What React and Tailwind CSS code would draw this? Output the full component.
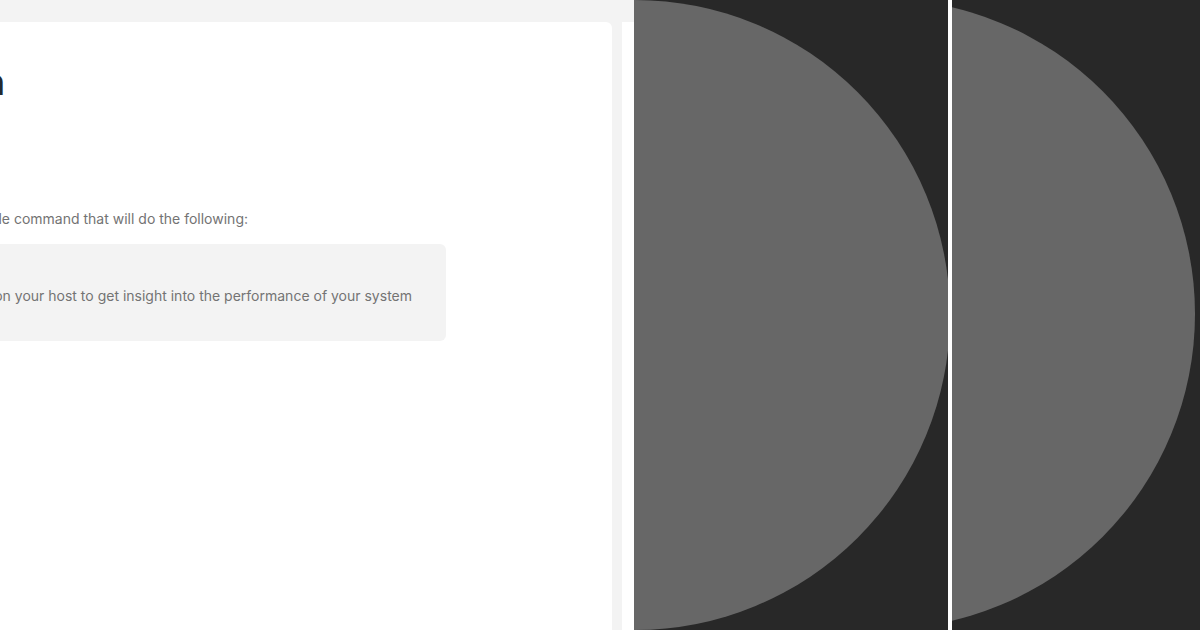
const font = { fontFamily: "Inter, 'Liberation Sans', sans-serif" };

function HalfMoon({ shift, top }) {
  // gray disc, its centre sits near the panel's left edge
  return (
    <div className="relative h-full overflow-hidden bg-[#282828]">
      <div
        className="absolute h-[630px] w-[630px] rounded-full bg-[#676767]"
        style={{ left: -315 - shift, top: top }}
      />
    </div>
  );
}

export default function App() {
  return (
    <div
      className="flex h-[630px] w-[1200px] overflow-hidden bg-[#f3f3f3]"
      style={font}
    >
      <div className="flex shrink-0 gap-[10px] pt-[22px]">
        <div className="flex w-[612px] flex-col overflow-hidden rounded-tr-md bg-white">
          <div className="mt-[38px] flex w-[5px] justify-end overflow-hidden whitespace-nowrap">
            <h1 className="text-[36px] font-semibold leading-[44px] text-[#24292f]">
              Installation
            </h1>
          </div>
          <div className="mt-[105px] flex w-[248px] justify-end overflow-hidden whitespace-nowrap">
            <p className="text-[14px] leading-[20px] text-[#737373]">
              We provide a single command that will do the following:
            </p>
          </div>
          <div className="mt-[15px] flex h-[97px] w-[446px] items-end rounded-r-md bg-[#f3f3f3] pb-[35px]">
            <div className="flex w-[412px] justify-end overflow-hidden whitespace-nowrap">
              <p className="text-[14px] leading-[20px] text-[#737373]">
                Install the Netdata agent on your host to get insight into the performance of your system
              </p>
            </div>
          </div>
        </div>
        <div className="w-[12px] bg-white" />
      </div>
      <div className="flex h-full flex-1">
        <div className="h-full w-[314px]">
          <HalfMoon shift={-1} top={0} />
        </div>
        <div className="w-[4px] bg-white" />
        <div className="h-full flex-1">
          <HalfMoon shift={72} top={-1} />
        </div>
      </div>
    </div>
  );
}
